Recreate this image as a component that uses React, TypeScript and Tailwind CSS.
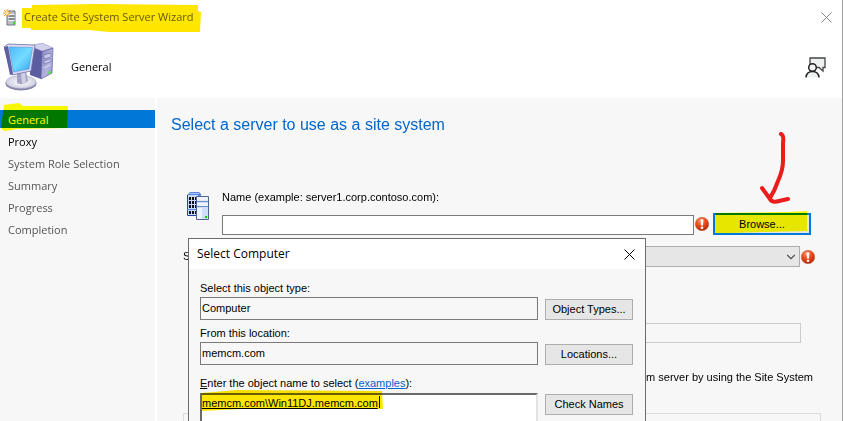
import { ChevronDown } from "lucide-react";

const steps = ["General", "Proxy", "System Role Selection", "Summary", "Progress", "Completion"];

const field = "h-[23px] w-full border border-[#7a7a7a] bg-[#f7f7f7] px-px pb-0.5 outline-none";
const pushButton =
  "flex h-[21px] w-[88px] items-center justify-center border border-[#adadad] bg-[#e6e6e6]";

function CloseIcon({ className }: { className: string }) {
  return (
    <svg viewBox="0 0 11 11" className={className} fill="none" stroke="currentColor">
      <path d="M.5.5l10 10M10.5.5l-10 10" />
    </svg>
  );
}

function WizardIcon() {
  return (
    <svg viewBox="0 0 13 17" className="h-[17px] w-[13px]">
      <path d="M5 2h7v14H4V7z" fill="#b9c0c6" stroke="#6d767e" />
      <path d="M5.5 5.5h6M5.5 8.5h6M5.5 11.5h6" stroke="#f2f5f7" />
      <path d="M6 7h5M6 10h5" stroke="#4b555e" />
      <path d="M10 13h2v2h-2z" fill="#38e01c" />
      <path d="M4 0v8M0 4h8M1 1l6 6M7 1L1 7" stroke="#ee9d2d" />
      <circle cx="4" cy="4" r="1.7" fill="#ffe9a8" />
    </svg>
  );
}

function ComputerIcon() {
  return (
    <svg viewBox="0 0 50 48" className="h-12 w-[50px]">
      <defs>
        <linearGradient id="screen" x1="0" y1="0" x2="1" y2="1">
          <stop offset="0" stopColor="#4fb8fa" />
          <stop offset=".5" stopColor="#74dcff" />
          <stop offset="1" stopColor="#2f9ff2" />
        </linearGradient>
        <linearGradient id="tower" x1="0" y1="0" x2="1" y2="1">
          <stop offset="0" stopColor="#8484c0" />
          <stop offset=".6" stopColor="#b4b4de" />
          <stop offset="1" stopColor="#8c8cc8" />
        </linearGradient>
        <radialGradient id="base">
          <stop offset="0" stopColor="#fff" />
          <stop offset="1" stopColor="#cfcfe2" />
        </radialGradient>
      </defs>
      <path d="M26 3l13 5-2 28-11-4z" fill="#5c5ca0" />
      <path d="M26 3l12-3 11 5-10 3.5z" fill="#d2d2ec" stroke="#8080b8" strokeWidth=".5" />
      <path d="M38 8.5l11-3.5-1 25-11 6z" fill="url(#tower)" stroke="#6060a0" strokeWidth=".7" />
      <path d="M40 12l7-2v4l-7 2zM40 18l7-2.5v3L40 21z" fill="#c9c9e8" stroke="#6a6aa8" strokeWidth=".6" />
      <path d="M39.5 25l7-3" stroke="#dcdcf4" />
      <circle cx="45.5" cy="29.5" r="1.5" fill="#5ee34c" />
      <ellipse cx="17" cy="40.5" rx="15.5" ry="7" fill="#8686aa" />
      <ellipse cx="17" cy="39" rx="15" ry="6.5" fill="url(#base)" stroke="#a9a9c6" strokeWidth=".6" />
      <path d="M13 30l9-2 2 10q-5 5-11 2z" fill="#a2a2c4" />
      <path d="M17 30l4-1 1 10-4 2z" fill="#d0d0e2" />
      <path d="M0 4l4-3 27 1-4 26-19 4z" fill="#dadaf0" stroke="#7070ae" strokeWidth=".8" />
      <path d="M0 4l4-1 5 28-3 1z" fill="#6060a4" />
      <path d="M5 4l23.500 .5-3.500 21.500L9.500 29z" fill="url(#screen)" stroke="#4a8fd0" strokeWidth=".5" />
    </svg>
  );
}

function FeedbackIcon() {
  return (
    <svg viewBox="0 0 21 21" className="h-[21px] w-[21px]" fill="#eef1f0" stroke="#444" strokeWidth="1.3">
      <path d="M5 8V1h15v9.5h-2V14l-4-3.5h-3" />
      <circle cx="7.5" cy="10.5" r="3.8" fill="#f4f4f4" stroke="#222" strokeWidth="1.5" />
      <path d="M1 20.5q.5-6 6.500-6t6.500 6" stroke="#222" strokeWidth="1.5" />
    </svg>
  );
}

function ServerIcon() {
  return (
    <svg viewBox="0 0 22 28" className="h-7 w-[22px]">
      <path d="M0 3l3-3h9l2 2v22H0z" fill="#5b86e0" />
      <path d="M3 1h9v1H2z" fill="#a9c6fa" />
      <path d="M0 3h11v21H0z" fill="#c9daf8" />
      <path d="M.5 3v20.5h10" fill="none" stroke="#27459a" />
      <path d="M0 17.5h10" stroke="#5b86e0" />
      <path d="M2 6.5h8M2 10.5h8M2 14.5h8M2 20.5h8" stroke="#10131c" strokeWidth="3" strokeDasharray="2 1" />
      <path d="M9.5 4.5h12v23h-12z" fill="#cfdff7" stroke="#4c648f" />
      <path d="M10 5h11v3.5H10zM10 11h11v3H10zM10 16h5v11h-5z" fill="#edf4ff" />
      <path d="M10 9.5h11M10 14.5h11" stroke="#6d8fc6" />
      <path d="M18 24h2v2h-2z" fill="#08d000" />
    </svg>
  );
}

function ErrorIcon() {
  return (
    <svg viewBox="0 0 14 14" className="h-3.5 w-3.5 shrink-0">
      <defs>
        <radialGradient id="alert" cx=".4" cy=".25" r=".75">
          <stop offset="0" stopColor="#ff9a70" />
          <stop offset=".5" stopColor="#f04a18" />
          <stop offset="1" stopColor="#b82a08" />
        </radialGradient>
      </defs>
      <circle cx="7" cy="7" r="6.7" fill="url(#alert)" stroke="#a8583c" strokeWidth=".5" />
      <path d="M5.6 2.500h2.800L8 8.500H6z" fill="#fff" />
      <circle cx="7" cy="10.7" r="1.3" fill="#fff" />
    </svg>
  );
}

function SelectComputerDialog() {
  return (
    <section className="absolute top-[140px] left-[31px] w-[458px] border border-[#6b6b6b] bg-[#f7f7f7]">
      <header className="flex h-[30px] items-center justify-between bg-white pr-2.5 pl-2 font-['Open_Sans',sans-serif] text-xs">
        <h2>Select Computer</h2>
        <button type="button" aria-label="Close">
          <CloseIcon className="h-[11px] w-[11px]" />
        </button>
      </header>
      <div className="grid grid-cols-[1fr_88px] items-end gap-x-[7px] pt-[11px] pr-3 pl-[11px]">
        <div>
          <label htmlFor="type" className="block h-[17px] leading-4">Select this object type:</label>
          <input id="type" readOnly value="Computer" className={field} />
        </div>
        <button type="button" className={pushButton}>Object Types...</button>
        <div className="pt-[5px]">
          <label htmlFor="location" className="block h-[17px] leading-4">From this location:</label>
          <input id="location" readOnly value="memcm.com" className={field} />
        </div>
        <button type="button" className={pushButton}>Locations...</button>
      </div>
      <div className="flex gap-[7px] pt-[10px] pr-3 pl-[11px]">
        <div className="relative flex-1">
          <div className="h-[18px] leading-4">
            <label htmlFor="names"><u>E</u>nter the object name to select (</label>
            <a href="#examples" className="text-[#0066cc] underline">examples</a>):
          </div>
          <textarea
            id="names"
            defaultValue="memcm.com\Win11DJ.memcm.com"
            className="block h-[60px] w-full resize-none border-2 border-[#e3e3e3] border-t-[#696969] border-l-[#696969] bg-white leading-4 underline outline-none"
          />
          <span className="absolute top-[21px] left-[179px] h-3 w-px bg-black" />
          <svg viewBox="0 0 184 24" className="pointer-events-none absolute top-[14px] left-0 h-6 w-[184px] mix-blend-multiply">
            <path d="M2 4l35-3 145 1 1 18-88-1-55 1-38 2z" fill="#ffe600" />
          </svg>
        </div>
        <button type="button" className={`${pushButton} mt-[19px]`}>Check Names</button>
      </div>
    </section>
  );
}

export default function App() {
  return (
    <div className="relative flex h-screen flex-col overflow-hidden border-r border-[#a0a0a0] bg-white font-['Liberation_Sans',Arial,sans-serif] text-[11px] text-black">
      <header className="h-[98px] shrink-0 font-['Open_Sans',sans-serif]">
        <div className="flex h-[35px] items-center justify-between pr-[10px] pl-[3px]">
          <div className="flex items-center gap-2">
            <WizardIcon />
            <h1 className="relative text-[#666]">
              Create Site System Server Wizard
              <svg viewBox="0 0 180 28" preserveAspectRatio="none" className="pointer-events-none absolute top-[-5px] left-[-2px] h-7 w-[180px] mix-blend-multiply">
                <path d="M10 1l66-1 100 1v6l3 1-1 20H87l-20-2H9v-2H0V4h10z" fill="#ffe600" />
              </svg>
            </h1>
          </div>
          <button type="button" aria-label="Close wizard" className="text-[#888]">
            <CloseIcon className="h-[11px] w-[11px]" />
          </button>
        </div>
        <div className="flex items-center justify-between pt-2 pr-4 pl-1">
          <div className="flex items-center gap-[17px]">
            <ComputerIcon />
            <span>General</span>
          </div>
          <button type="button" aria-label="Feedback">
            <FeedbackIcon />
          </button>
        </div>
      </header>

      <div className="flex min-h-0 flex-1 gap-0.5">
        <nav className="w-[155px] shrink-0 bg-[#f7f7f7] pt-3 font-['Open_Sans',sans-serif]">
          {steps.map((step, index) => (
            <a
              key={step}
              href="#step"
              className={`relative mb-1 block h-[18px] pl-2 leading-5 ${
                index === 0 ? "bg-[#0078d7] text-white" : index === 1 ? "text-black" : "text-[#555]"
              }`}
            >
              {step}
              {index === 0 && (
                <svg viewBox="0 0 70 28" className="pointer-events-none absolute top-[-7px] left-0 h-7 w-[70px] mix-blend-multiply">
                  <path d="M4 2l15-2 4 3h45l-1 22-50 1-12 2-4-2z" fill="#ffff00" />
                </svg>
              )}
            </a>
          ))}
        </nav>

        <main className="relative flex-1 bg-[#f7f7f7]">
          <h2 className="pt-[17px] pl-[14px] text-base leading-5 text-[#0066cc]">
            Select a server to use as a site system
          </h2>
          <div className="flex gap-[13px] pt-[53px] pr-[31px] pl-[30px]">
            <div className="pt-1">
              <ServerIcon />
            </div>
            <div className="flex-1">
              <label htmlFor="server" className="block h-[25px] leading-[18px]">
                Name (example: server1.corp.contoso.com):
              </label>
              <div className="flex items-center">
                <input id="server" className="mt-px h-5 min-w-0 flex-1 border border-[#7a7a7a] bg-white px-1 outline-none" />
                <span className="mr-1 ml-px">
                  <ErrorIcon />
                </span>
                <button type="button" className="relative h-[22px] w-[98px] border-2 border-[#0078d7] bg-[#e6e6e6]">
                  Browse...
                  <svg viewBox="0 0 94 24" preserveAspectRatio="none" className="pointer-events-none absolute top-[-4px] left-0 h-6 w-[94px] mix-blend-multiply">
                    <path d="M0 2l75-1 17-1v20l-44 1-32 1H0z" fill="#ffff00" />
                  </svg>
                </button>
              </div>
            </div>
          </div>

          <div className="flex items-center pt-[11px] pr-[27px] pl-[26px]">
            <label htmlFor="site" className="w-[100px]">S</label>
            <div className="relative flex-1">
              <select id="site" className="block h-[21px] w-full appearance-none border border-[#adadad] bg-[#e6e6e6]" />
              <ChevronDown className="pointer-events-none absolute top-1 right-0.5 h-3.5 w-3.5 text-[#555]" />
            </div>
            <span className="ml-px">
              <ErrorIcon />
            </span>
          </div>

          <div className="pt-14 pr-[41px] pl-16">
            <input disabled aria-label="Server account" className="block h-5 w-full border border-[#ccc] bg-[#f7f7f7]" />
          </div>
          <p className="pt-[26px] pr-[29px] text-right leading-4">tem server by using the Site System</p>
          <fieldset className="mt-7 mr-[21px] ml-[26px] h-10 border border-[#dcdcdc]" />

          <svg
            viewBox="0 0 32 74"
            className="pointer-events-none absolute top-[33px] right-[51px] h-[74px] w-8"
            fill="none"
            stroke="#ea1c1c"
            strokeWidth="4"
            strokeLinecap="round"
            strokeLinejoin="round"
          >
            <path d="M22 3q3 1 2 9v18q0 9-5 20-3 9-8 17M3 57l8 11q2 4 9 2l9-2" />
          </svg>

          <SelectComputerDialog />
        </main>
      </div>
    </div>
  );
}
